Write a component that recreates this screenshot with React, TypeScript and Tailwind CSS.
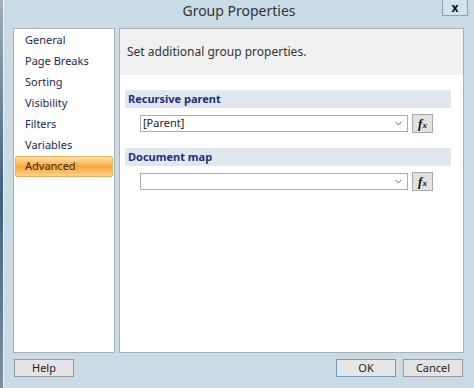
import React from "react";
import { ChevronDown } from "lucide-react";

const navItems = ["General", "Page Breaks", "Sorting", "Visibility", "Filters", "Variables", "Advanced"];

function FxButton() {
  return (
    <button className="w-[21px] h-[19px] border border-[#a9a9a9] bg-[#e1e1e1] flex items-center justify-center font-['Liberation_Serif',serif] italic font-bold text-[#111] leading-none">
      <span className="text-[13px]">f</span>
      <span className="text-[9px] mt-[3px]">x</span>
    </button>
  );
}

function Combo({ value }: { value: string }) {
  return (
    <div className="flex items-center gap-[4px]">
      <div className="w-[268px] h-[17px] border border-[#abadb3] bg-white flex items-center justify-between pl-[2px] pr-[3px]">
        <span className="text-[11px] text-[#222]">{value}</span>
        <ChevronDown size={11} strokeWidth={2} className="text-[#555]" />
      </div>
      <FxButton />
    </div>
  );
}

function Section({ title, value }: { title: string; value: string }) {
  return (
    <div className="flex flex-col">
      <div className="h-[18px] mr-[12px] bg-[#dfe8ef] flex items-center pl-[3px] text-[11px] font-bold text-[#1f2f7a]">
        {title}
      </div>
      <div className="pl-[15px] pt-[6px]">
        <Combo value={value} />
      </div>
    </div>
  );
}

export default function App() {
  return (
    <div className="w-[474px] h-[388px] flex overflow-hidden font-['Noto_Sans',sans-serif]">
      {/* desktop behind the dialog */}
      <div className="w-[3px] bg-gradient-to-b from-[#a5aeb5] via-[#3f5f88] to-[#7d8ea0]" />

      <div className="flex-1 flex flex-col bg-[#c9dce5] border-l border-[#eef4f7]">
        {/* Title bar */}
        <div className="relative h-[28px] flex justify-center pt-[1px]">
          <span className="text-[14px] text-[#333] leading-[20px]">Group Properties</span>
          <button className="absolute right-[6px] top-0 w-[26px] h-[16px] border border-[#8fa5ae] border-t-0 bg-[#d3e3ea] flex items-center justify-center text-[12px] font-bold text-[#111] leading-none">
            x
          </button>
        </div>

        {/* Body */}
        <div className="flex h-[325px] pl-[9px] pr-[10px] gap-[4px]">
          <div className="w-[102px] bg-white border border-[#a8b0b4] pt-[1px] px-[1px]">
            {navItems.map((item) =>
              item === "Advanced" ? (
                <div
                  key={item}
                  className="h-[21px] flex items-center pl-[9px] text-[11px] text-[#3b2a0e] border border-[#e9b457] rounded-[2px] bg-gradient-to-b from-[#fde4a6] via-[#f9a43d] to-[#fcd486]"
                >
                  {item}
                </div>
              ) : (
                <div key={item} className="h-[21px] flex items-center pl-[10px] text-[11px] text-[#1b2858]">
                  {item}
                </div>
              )
            )}
          </div>

          <div className="flex-1 bg-white border border-[#a8b0b4] flex flex-col">
            <div className="h-[46px] bg-[#f0f0f0] flex items-center pl-[7px] text-[12px] text-[#333]">
              Set additional group properties.
            </div>
            <div className="pl-[5px] pt-[15px] flex flex-col gap-[15px]">
              <Section title="Recursive parent" value="[Parent]" />
              <Section title="Document map" value="" />
            </div>
          </div>
        </div>

        {/* Buttons */}
        <div className="flex items-center justify-between mt-[6px] pl-[10px] pr-[11px]">
          <button className="w-[60px] h-[18px] border border-[#9a9a9a] bg-[#e4e4e4] text-[11px] text-[#222]">Help</button>
          <div className="flex gap-[7px]">
            <button className="w-[60px] h-[18px] border border-[#6f9dc0] bg-[#e6e6e6] text-[11px] text-[#222]">OK</button>
            <button className="w-[60px] h-[18px] border border-[#9a9a9a] bg-[#e4e4e4] text-[11px] text-[#222]">Cancel</button>
          </div>
        </div>
      </div>
    </div>
  );
}
